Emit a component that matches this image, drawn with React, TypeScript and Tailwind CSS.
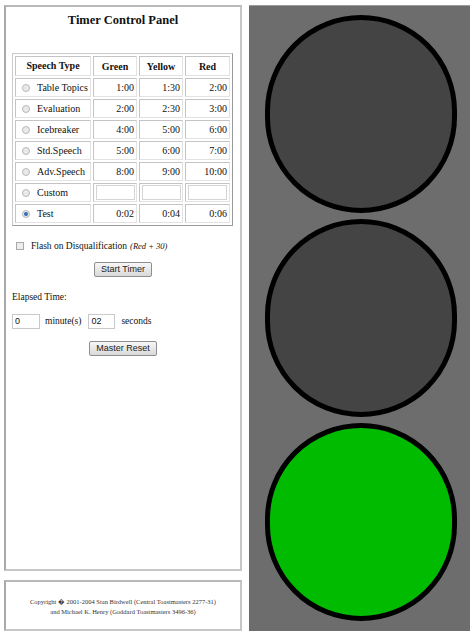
const ROWS = [
  { name: 'Table Topics', g: '1:00', y: '1:30', r: '2:00' },
  { name: 'Evaluation', g: '2:00', y: '2:30', r: '3:00' },
  { name: 'Icebreaker', g: '4:00', y: '5:00', r: '6:00' },
  { name: 'Std.Speech', g: '5:00', y: '6:00', r: '7:00' },
  { name: 'Adv.Speech', g: '8:00', y: '9:00', r: '10:00' },
]

const cell = 'border border-[#c4c4c4] border-b-[#e2e2e2] border-r-[#e2e2e2] p-0'
const btn =
  "h-[15px] rounded-[2px] border border-[#8e8e8e] bg-gradient-to-b from-[#f7f7f7] to-[#d9d9d9] px-[6px] text-[9px] leading-[13px] text-[#222] font-['Liberation_Sans',Arial,sans-serif]"

function Radio({ checked = false }: { checked?: boolean }) {
  return (
    <span className="ml-[6px] mr-[7px] inline-flex h-[8px] w-[8px] items-center justify-center rounded-full border border-[#b9b9b9] bg-[#e9e9e9]">
      {checked && <span className="h-[4px] w-[4px] rounded-full bg-[#2d6fb8]" />}
    </span>
  )
}

function NumCell({ v }: { v: string }) {
  return (
    <td className={cell}>
      <div className="h-[17px] pr-[2px] text-right leading-[17px]">{v}</div>
    </td>
  )
}

function BlankCell() {
  return (
    <td className={cell}>
      <div className="flex h-[17px] items-center justify-center">
        <span className="h-[15px] w-[39px] border border-[#d4d4d4] bg-white" />
      </div>
    </td>
  )
}

function Light({ color }: { color: string }) {
  return <div className={`h-[198px] w-[192px] rounded-full border-[5px] border-black ${color}`} />
}

export default function App() {
  return (
    <div className="flex h-[637px] w-[474px] gap-[7px] bg-white pl-[4px] pt-[5px] font-['Liberation_Serif','Times_New_Roman',serif] text-[10px] text-[#111]">
      <div className="flex w-[238px] flex-col gap-[9px]">
        <div className="h-[566px] border-2 border-[#c6c6c6] border-l-[#a9a9a9] border-t-[#b9b9b9] pl-[6px]">
          <div className="mt-[5px] pr-[6px] text-center text-[12.5px] font-bold leading-[16px]">
            Timer Control Panel
          </div>

          <table className="mt-[25px] border-separate border-spacing-[2px] border border-[#9a9a9a] border-l-[#c9c9c9] border-t-[#c9c9c9]">
            <thead>
              <tr>
                <th className={`${cell} w-[76px]`}>
                  <div className="h-[18px] leading-[18px]">Speech Type</div>
                </th>
                <th className={`${cell} w-[44px]`}>Green</th>
                <th className={`${cell} w-[44px]`}>Yellow</th>
                <th className={`${cell} w-[45px]`}>Red</th>
              </tr>
            </thead>
            <tbody>
              {ROWS.map((row) => (
                <tr key={row.name}>
                  <td className={cell}>
                    <div className="flex h-[17px] items-center">
                      <Radio />
                      {row.name}
                    </div>
                  </td>
                  <NumCell v={row.g} />
                  <NumCell v={row.y} />
                  <NumCell v={row.r} />
                </tr>
              ))}
              <tr>
                <td className={cell}>
                  <div className="flex h-[17px] items-center">
                    <Radio />
                    Custom
                  </div>
                </td>
                <BlankCell />
                <BlankCell />
                <BlankCell />
              </tr>
              <tr>
                <td className={cell}>
                  <div className="flex h-[17px] items-center">
                    <Radio checked />
                    Test
                  </div>
                </td>
                <NumCell v="0:02" />
                <NumCell v="0:04" />
                <NumCell v="0:06" />
              </tr>
            </tbody>
          </table>

          <div className="mt-[13px] flex h-[14px] items-center text-[9.5px]">
            <span className="ml-[4px] mr-[7px] h-[8px] w-[8px] border border-[#a9a9a9] bg-[#eeeeee]" />
            <span>Flash on Disqualification</span>
            <span className="ml-[3px] text-[8.5px] italic">(Red + 30)</span>
          </div>

          <div className="mt-[9px] flex justify-center pr-[6px]">
            <button className={btn}>Start Timer</button>
          </div>

          <div className="mt-[13px] text-[9.5px] leading-[14px]">Elapsed Time:</div>

          <div className="mt-[10px] flex h-[15px] items-center text-[9.5px]">
            <span className="flex h-[15px] w-[28px] items-center border border-[#c9c9c9] bg-white pl-[2px] font-['Liberation_Sans',Arial,sans-serif] text-[9px]">
              0
            </span>
            <span className="ml-[5px]">minute(s)</span>
            <span className="ml-[7px] flex h-[15px] w-[27px] items-center border border-[#c9c9c9] bg-white pl-[2px] font-['Liberation_Sans',Arial,sans-serif] text-[9px]">
              02
            </span>
            <span className="ml-[6px]">seconds</span>
          </div>

          <div className="mt-[12px] flex justify-center pr-[6px]">
            <button className={btn}>Master Reset</button>
          </div>
        </div>

        <div className="flex h-[51px] flex-col items-center justify-center border-2 border-[#c6c6c6] border-l-[#a9a9a9] border-t-[#b9b9b9] pt-[3px] text-center text-[6.5px] leading-[10px] text-[#333]">
          <div>Copyright {'\uFFFD'} 2001-2004 Stan Birdwell (Central Toastmasters 2277-31)</div>
          <div>and Michael K. Henry (Goddard Toastmasters 3496-36)</div>
        </div>
      </div>

      <div className="flex h-[626px] w-[221px] flex-col items-center gap-[6px] border-t border-[#9a9a9a] bg-[#6d6d6d] pl-[3px] pt-[9px]">
        <Light color="bg-[#444444]" />
        <Light color="bg-[#444444]" />
        <Light color="bg-[#00bb00]" />
      </div>
    </div>
  )
}
